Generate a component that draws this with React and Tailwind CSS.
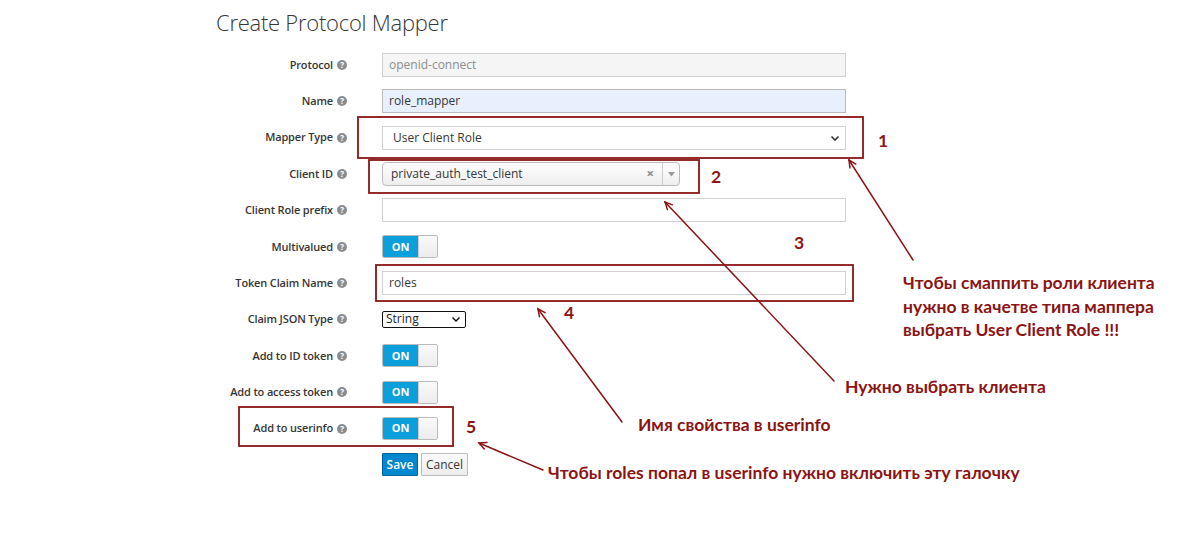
import React from "react";

const RED = "#8b1414";

function Help() {
  return (
    <span className="ml-[4px] inline-flex h-[10px] w-[10px] items-center justify-center rounded-full bg-[#8a8d90] text-[8px] font-bold leading-none text-white">
      ?
    </span>
  );
}

function Row({ label, children }) {
  return (
    <div className="flex h-[36.36px] items-center">
      <div className="flex w-[147px] items-center justify-end text-[11px] font-semibold tracking-[-0.15px] text-[#363636]">
        <span>{label}</span>
        <Help />
      </div>
      <div className="ml-[35px] flex items-center">{children}</div>
    </div>
  );
}

function Switch() {
  return (
    <div className="flex h-[23px] w-[56px] overflow-hidden rounded-[2px] border border-[#bbbbbb]">
      <div className="flex w-[35px] items-center justify-center bg-[#0ba0db] text-[11px] font-bold text-white">
        ON
      </div>
      <div className="flex-1 border-l border-[#cccccc] bg-gradient-to-b from-[#fafafa] to-[#ececec]" />
    </div>
  );
}

function Arrow({ x1, y1, x2, y2 }) {
  const a = Math.atan2(y1 - y2, x1 - x2);
  const L = 8;
  const s = 0.45;
  const h1 = [x2 + L * Math.cos(a + s), y2 + L * Math.sin(a + s)];
  const h2 = [x2 + L * Math.cos(a - s), y2 + L * Math.sin(a - s)];
  return (
    <g stroke={RED} strokeWidth="1.5" fill="none" strokeLinecap="round">
      <line x1={x1} y1={y1} x2={x2} y2={y2} />
      <polyline points={`${h1[0]},${h1[1]} ${x2},${y2} ${h2[0]},${h2[1]}`} />
    </g>
  );
}

export default function App() {
  return (
    <div
      className="relative h-[557px] w-[1200px] overflow-hidden bg-white"
      style={{ fontFamily: '"Open Sans", "Noto Sans", sans-serif' }}
    >
      <div className="pl-[200px]">
        <h1 className="h-[46.8px] pl-[16px] pt-[8px] text-[22px] font-light leading-[28px] tracking-[-0.25px] text-[#363636]">
          Create Protocol Mapper
        </h1>
        <Row label="Protocol">
          <div className="flex h-[24px] w-[464px] items-center border border-[#d1d1d1] bg-[#f5f5f5] px-[6px] text-[12px] text-[#8b8d8f]">
            openid-connect
          </div>
        </Row>
        <Row label="Name">
          <div className="flex h-[24px] w-[464px] items-center border border-[#bbbbbb] bg-[#e8f0fe] px-[6px] text-[12px] text-[#363636]">
            role_mapper
          </div>
        </Row>
        <Row label="Mapper Type">
          <div className="flex h-[24px] w-[464px] items-center justify-between border border-[#d1d1d1] bg-white pl-[10px] pr-[4px] text-[12px] text-[#363636]">
            <span>User Client Role</span>
            <svg width="12" height="12" viewBox="0 0 12 12">
              <polyline points="2.5,4.5 6,8 9.5,4.5" fill="none" stroke="#363636" strokeWidth="1.6" />
            </svg>
          </div>
        </Row>
        <Row label="Client ID">
          <div className="flex h-[24px] w-[298px] items-center rounded-[4px] border border-[#bbbbbb] bg-gradient-to-b from-white to-[#eeeeee] text-[12px] text-[#363636]">
            <span className="flex-1 pl-[8px]">private_auth_test_client</span>
            <span className="mr-[8px] text-[13px] font-bold text-[#888888]">×</span>
            <div className="flex h-full w-[17px] items-center justify-center border-l border-[#cccccc]">
              <svg width="7" height="5" viewBox="0 0 7 5">
                <polygon points="0,0 7,0 3.5,4.5" fill="#9a9a9a" />
              </svg>
            </div>
          </div>
        </Row>
        <Row label="Client Role prefix">
          <div className="h-[24px] w-[464px] border border-[#d1d1d1] bg-white" />
        </Row>
        <Row label="Multivalued">
          <Switch />
        </Row>
        <Row label="Token Claim Name">
          <div className="flex h-[24px] w-[464px] items-center border border-[#d1d1d1] bg-white px-[6px] text-[12px] text-[#363636]">
            roles
          </div>
        </Row>
        <Row label="Claim JSON Type">
          <div className="flex h-[17px] w-[84px] items-center justify-between rounded-[2px] border border-[#111111] bg-white pl-[3px] pr-[4px] text-[12px] text-[#222222]">
            <span className="leading-none">String</span>
            <svg width="10" height="10" viewBox="0 0 10 10">
              <polyline points="1.5,3.5 5,7 8.5,3.5" fill="none" stroke="#111" strokeWidth="1.5" />
            </svg>
          </div>
        </Row>
        <Row label="Add to ID token">
          <Switch />
        </Row>
        <Row label="Add to access token">
          <Switch />
        </Row>
        <Row label="Add to userinfo">
          <Switch />
        </Row>
        <div className="flex h-[36.36px] items-center pl-[182px]">
          <button className="h-[23px] w-[36px] rounded-[1px] border border-[#00659c] bg-[#0088ce] text-[12px] font-semibold text-white">
            Save
          </button>
          <button className="ml-[3px] h-[23px] w-[47px] rounded-[1px] border border-[#bbbbbb] bg-gradient-to-b from-[#fafafa] to-[#ededed] text-[12px] text-[#363636]">
            Cancel
          </button>
        </div>
      </div>

      {/* annotation overlay */}
      <svg className="pointer-events-none absolute left-0 top-0" width="1200" height="557">
        <g stroke={RED} strokeWidth="1.8" fill="none">
          <rect x="358" y="117" width="505" height="41" />
          <rect x="369" y="160" width="330" height="33" />
          <rect x="376" y="265" width="477" height="36" />
          <rect x="239" y="407" width="214" height="39" />
        </g>
        <Arrow x1={913} y1={260} x2={849} y2={160} />
        <Arrow x1={834} y1={381} x2={665} y2={202} />
        <Arrow x1={622} y1={422} x2={538} y2={309} />
        <Arrow x1={543} y1={470} x2={479} y2={443} />
      </svg>

      <div
        className="pointer-events-none absolute inset-0 font-bold text-[#8b1414]"
        style={{ fontFamily: 'Lato, "Noto Sans", sans-serif' }}
      >
        <div className="absolute left-[878px] top-[130px] text-[17.5px] leading-[22px]">1</div>
        <div className="absolute left-[711px] top-[166px] text-[17.5px] leading-[22px]">2</div>
        <div className="absolute left-[794px] top-[232px] text-[17.5px] leading-[22px]">3</div>
        <div className="absolute left-[564px] top-[302px] text-[17.5px] leading-[22px]">4</div>
        <div className="absolute left-[466px] top-[416px] text-[17.5px] leading-[22px]">5</div>
        <div className="absolute left-[903px] top-[271px] text-[17.5px] leading-[23.5px]">
          <div>Чтобы смаппить роли клиента</div>
          <div>нужно в качетве типа маппера</div>
          <div>выбрать User Client Role !!!</div>
        </div>
        <div className="absolute left-[845px] top-[375px] text-[17.5px] leading-[23.5px]">Нужно выбрать клиента</div>
        <div className="absolute left-[638px] top-[413px] text-[17.5px] leading-[23.5px]">Имя свойства в userinfo</div>
        <div className="absolute left-[548px] top-[461px] whitespace-nowrap text-[17.5px] leading-[23.5px]">
          Чтобы roles попал в userinfo нужно включить эту галочку
        </div>
      </div>
    </div>
  );
}
